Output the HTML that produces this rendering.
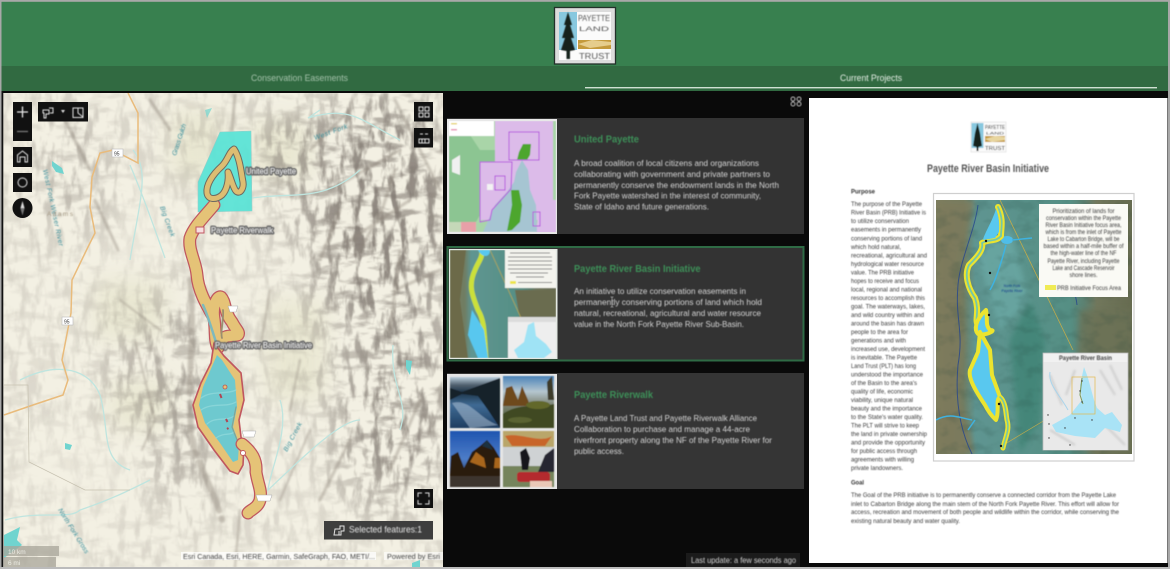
<!DOCTYPE html>
<html lang="en">
<head>
<meta charset="utf-8">
<title>Payette Land Trust</title>
<style>
html,body{margin:0;padding:0;background:#0a0a0a;width:1170px;height:569px;overflow:hidden}
svg{display:block}
text{font-family:"Liberation Sans",sans-serif}
.c{font-size:8.6px;fill:#d6d6d6}
.h{font-size:10.4px;font-weight:bold;fill:#3d9058}
.d{font-size:6.2px;fill:#3a3a3a}
.b{font-size:6.1px;fill:#3a3a3a}
.r{font-size:6.6px;fill:#3a8f9c;font-style:italic}
.l{font-size:8.4px;fill:#efefef;stroke:#666;stroke-width:3px;paint-order:stroke;stroke-linejoin:round}
.i{stroke:#e0e0e0;fill:none;stroke-width:1}
</style>
</head>
<body>
<svg width="1170" height="569" viewBox="0 0 1170 569" xmlns="http://www.w3.org/2000/svg">
<defs>
<filter id="ridge" x="0" y="0" width="100%" height="100%" color-interpolation-filters="sRGB">
<feTurbulence type="fractalNoise" baseFrequency=".11 .035" numOctaves="4" seed="7"/>
<feColorMatrix values="0 0 0 0 .47  0 0 0 0 .44  0 0 0 0 .41  4.5 0 0 0 -2.15"/>
<feGaussianBlur stdDeviation=".6"/>
</filter>
<filter id="ridge2" x="0" y="0" width="100%" height="100%" color-interpolation-filters="sRGB">
<feTurbulence type="fractalNoise" baseFrequency=".035 .1" numOctaves="4" seed="21"/>
<feColorMatrix values="0 0 0 0 .5  0 0 0 0 .47  0 0 0 0 .44  4.5 0 0 0 -2.25"/>
<feGaussianBlur stdDeviation=".6"/>
</filter>
<filter id="veg" x="0" y="0" width="100%" height="100%" color-interpolation-filters="sRGB">
<feTurbulence type="fractalNoise" baseFrequency=".06 .09" numOctaves="3" seed="5"/>
<feColorMatrix values="0 0 0 0 .12  0 0 0 0 .25  0 0 0 0 .22  4 0 0 0 -1.9"/>
<feGaussianBlur stdDeviation=".5"/>
</filter>
<filter id="b12"><feGaussianBlur stdDeviation="12"/></filter>
<filter id="b25"><feGaussianBlur stdDeviation="22"/></filter>
<filter id="b3"><feGaussianBlur stdDeviation="3"/></filter>
<filter id="b1"><feGaussianBlur stdDeviation="1"/></filter>
<filter id="b06"><feGaussianBlur stdDeviation=".6"/></filter>
<filter id="bt"><feGaussianBlur stdDeviation=".42"/></filter>
<mask id="mt" maskUnits="userSpaceOnUse" x="0" y="90" width="450" height="480">
<rect x="0" y="90" width="450" height="480" fill="#3a3a3a"/>
<g filter="url(#b25)">
<ellipse cx="380" cy="210" rx="75" ry="120" fill="#fff"/>
<ellipse cx="395" cy="400" rx="55" ry="110" fill="#e8e8e8"/>
<ellipse cx="300" cy="160" rx="40" ry="50" fill="#bbb"/>
<ellipse cx="188" cy="400" rx="16" ry="100" fill="#fff"/>
<ellipse cx="70" cy="170" rx="35" ry="60" fill="#888"/>
<ellipse cx="150" cy="370" rx="40" ry="45" fill="#999"/>
<ellipse cx="80" cy="470" rx="70" ry="50" fill="#222"/>
<ellipse cx="300" cy="310" rx="30" ry="70" fill="#333"/>
<ellipse cx="330" cy="490" rx="20" ry="40" fill="#222"/>
<ellipse cx="135" cy="240" rx="30" ry="50" fill="#111"/>
</g>
</mask>
<clipPath id="mc"><rect x="3" y="93" width="440" height="474"/></clipPath>
<clipPath id="c1"><rect x="449" y="121" width="107" height="111"/></clipPath>
<clipPath id="c2"><rect x="450" y="250" width="106" height="108"/></clipPath>
<clipPath id="dm"><rect x="936" y="200" width="196" height="254"/></clipPath>
<clipPath id="q1"><rect x="450" y="377" width="50" height="51"/></clipPath>
<clipPath id="q2"><rect x="503" y="376" width="51" height="52"/></clipPath>
<clipPath id="q3"><rect x="450" y="431" width="50" height="56"/></clipPath>
<clipPath id="q4"><rect x="503" y="431" width="51" height="56"/></clipPath>
<linearGradient id="dmb" x1="0" x2="1" y1="0" y2="0">
<stop offset="0" stop-color="#7d7f5f"/><stop offset=".14" stop-color="#6f7d63"/><stop offset=".2" stop-color="#5f9591"/><stop offset=".68" stop-color="#558f84"/><stop offset=".76" stop-color="#5d8070"/><stop offset=".82" stop-color="#71775c"/><stop offset="1" stop-color="#666b50"/>
</linearGradient>
<linearGradient id="s1" x1="0" y1="0" x2="0" y2="1"><stop offset="0" stop-color="#bcd0df"/><stop offset=".16" stop-color="#50606e"/><stop offset=".3" stop-color="#1d3448"/><stop offset=".55" stop-color="#3f6a94"/><stop offset="1" stop-color="#1e3d60"/></linearGradient>
<linearGradient id="s2" x1="0" y1="0" x2="0" y2="1"><stop offset="0" stop-color="#4b83b8"/><stop offset=".3" stop-color="#b5c6cf"/><stop offset=".55" stop-color="#7d8474"/><stop offset="1" stop-color="#3f4a22"/></linearGradient>
<linearGradient id="s3" x1="0" y1="0" x2="0" y2="1"><stop offset="0" stop-color="#1f55b0"/><stop offset=".5" stop-color="#4d7dc8"/><stop offset="1" stop-color="#1c1f2a"/></linearGradient>
</defs>

<!-- frame + header -->
<rect width="1170" height="569" fill="#0a0a0a"/>
<rect x="0" y="0" width="1170" height="66" fill="#38804f"/>
<rect x="0" y="66" width="1170" height="25" fill="#316a41"/>
<rect x="585" y="87" width="572" height="1.4" fill="#cfe0d2"/>
<g filter="url(#bt)">
<text x="251" y="81" font-size="9.4" fill="#a4c2aa" textLength="97" lengthAdjust="spacingAndGlyphs">Conservation Easements</text>
<text x="840" y="81" font-size="9.4" fill="#e6efe6" textLength="62" lengthAdjust="spacingAndGlyphs">Current Projects</text>
</g>

<!-- logo -->
<g>
<rect x="554.500" y="7.500" width="61" height="56.500" fill="#dcdcdc" stroke="#23302a" stroke-width="1.300"/>
<rect x="559" y="12" width="52" height="48" fill="#fbfbfb"/>
<rect x="559" y="12" width="18" height="38" fill="#88c8df"/>
<path d="M568 12 L572 25 L570 25 L574 38 L571 38 L575 50 L570 51 L570 59 L566.500 59 L566.500 51 L561 50 L565 38 L562 38 L566 25 L564 25Z" fill="#17211f" filter="url(#b06)"/>
<g filter="url(#bt)">
<text x="578" y="21" font-size="8.300" fill="#555" textLength="32" lengthAdjust="spacingAndGlyphs">PAYETTE</text>
<text x="579" y="31" font-size="6.500" fill="#555" textLength="30" lengthAdjust="spacingAndGlyphs">LAND</text>
<text x="579" y="59" font-size="8.600" fill="#555" textLength="31" lengthAdjust="spacingAndGlyphs">TRUST</text>
</g>
<rect x="578" y="40" width="33" height="9" fill="#c49a3c"/>
<path d="M578 44 L592 40 L611 42 L611 45 L590 48 Z" fill="#e6cd8c"/>
</g>

<!-- MAP -->
<g clip-path="url(#mc)">
<rect x="3" y="93" width="440" height="474" fill="#f3f0e3"/>
<g filter="url(#b12)" fill="#e9e7d2">
<rect x="170" y="110" width="55" height="70"/>
<rect x="95" y="280" width="70" height="60"/>
<rect x="265" y="300" width="60" height="100"/>
<rect x="110" y="380" width="60" height="50"/>
<rect x="250" y="120" width="60" height="60"/>
</g>
<g mask="url(#mt)">
<rect x="3" y="93" width="440" height="474" filter="url(#ridge)" opacity=".8"/>
<rect x="3" y="93" width="440" height="474" filter="url(#ridge2)" opacity=".6"/>
</g>
<g fill="none" stroke="#8c8378" stroke-linecap="round" filter="url(#b1)" opacity=".42">
<path d="M190 280 C196 330 186 380 192 440 C200 470 214 490 222 520" stroke-width="6" stroke-dasharray="30 5 18 8"/>
<path d="M310 150 L350 110 M330 190 L400 150 M350 240 L410 200 M395 100 L430 170 L440 190 M395 170 L382 210 L360 250 M340 210 L320 260 M400 250 L390 330 M395 290 L440 270 M350 440 L320 500 M420 400 L390 470 M150 100 L170 130 M235 95 L232 130 M60 110 L90 170 M95 200 L118 250" stroke-width="3"/>
<path d="M135 340 L155 420 L142 450 M120 300 L160 330 M260 350 L270 290 M300 360 L290 410 M310 430 L280 500 M240 510 L235 567" stroke-width="2"/>
</g>
<g fill="none" stroke="#bfe5df" stroke-width="1.300">
<path d="M130 260 C140 200 150 170 133 150 M165 258 C155 230 145 200 130 165 M20 380 C60 360 90 370 100 395 C110 430 100 460 130 470 M5 520 C40 510 70 520 80 510 C110 500 130 490 150 480 M320 110 L308 118 C350 105 360 120 400 140 M240 200 C290 190 320 205 360 170 M280 400 C290 430 270 470 268 490 C300 460 340 420 360 420 M393 345 C390 390 410 400 400 430"/>
</g>
<g fill="#70d4cf">
<path d="M52 161 L62 168 L64 174 L56 172 L52 166Z"/>
<path d="M406 360 L412 361 L410 375 L406 368Z"/>
<path d="M65 443 L72 445 L70 450 L65 449Z"/>
<path d="M205 110 L212 108 L207 118Z" opacity=".7"/>
<path d="M4 535 L20 527 L17 540 L22 545 L4 558Z"/>
<path d="M412 563 L420 560 L420 567 L412 567Z"/>
</g>
<path d="M128 93 L138 113 L138 163 L113 150 L100 153 L92 177 L90 207 L95 233 L88 247 L72 280 L71 313 L62 360 L68 380 L63 395 L33 405 L4 415" fill="none" stroke="#e9bb7b" stroke-width="1.500"/>
<rect x="112" y="149" width="11" height="8" fill="#fff" stroke="#bbb" stroke-width=".6"/>
<text x="114" y="155.500" font-size="5" fill="#333">95</text>
<rect x="62" y="317" width="11" height="8" fill="#fff" stroke="#bbb" stroke-width=".6"/>
<text x="64" y="323.500" font-size="5" fill="#333">95</text>
<path d="M4 385 L28 385 L29 462 L85 490 L130 490" fill="none" stroke="#c7c2b1" stroke-width=".7"/>

<!-- cyan area -->
<path d="M220 132 L251 131 L252 211 L198 212 L198 182Z" fill="#58e4d7" stroke="#8ecbc7" stroke-width=".6" opacity=".92"/>
<!-- corridor -->
<g fill="none" stroke-linejoin="round" stroke-linecap="round">
<path d="M214 205 C206 215 194 226 190 238 C188 250 196 262 197 275 C198 290 206 304 214 318 M214 318 C212 305 218 295 221 297 C226 302 224 312 232 322 C236 330 240 332 238 335 C232 337 226 334 222 340 M214 318 C216 330 214 340 218 348" stroke="#c0565f" stroke-width="13"/>
<path d="M214 205 C206 215 194 226 190 238 C188 250 196 262 197 275 C198 290 206 304 214 318 M214 318 C212 305 218 295 221 297 C226 302 224 312 232 322 C236 330 240 332 238 335 C232 337 226 334 222 340 M214 318 C216 330 214 340 218 348" stroke="#e5c377" stroke-width="10.500"/>
<path d="M203 305 C208 316 212 330 216 342" stroke="#7db9bd" stroke-width="2.500"/>
<path d="M223 310 C224 320 220 332 222 338" stroke="#9a8f6f" stroke-width="1.800"/>
<!-- upper lake loop -->
<path d="M234 149 C229 152 228 160 222 166 C212 175 206 185 207 193 C208 200 216 200 222 195 C227 190 229 180 228 172 C231 178 233 188 236 191 C240 195 244 188 243 182 C241 172 240 158 234 149Z" stroke="#6d6a62" stroke-width="7"/>
<path d="M234 149 C229 152 228 160 222 166 C212 175 206 185 207 193 C208 200 216 200 222 195 C227 190 229 180 228 172 C231 178 233 188 236 191 C240 195 244 188 243 182 C241 172 240 158 234 149Z" stroke="#ddbd72" stroke-width="5"/>
<!-- lower lake outer -->
<path d="M214 343 L211 363 L201 383 L193 405 L198 427 L214 450 L230 471 L238 474 L243 465 L244 445 L241 437 L239 420 L244 400 L241 373 L224 356Z" fill="#e5c377" stroke="#c0565f" stroke-width="1.600"/>
<path d="M217 355 L203 387 L199 405 L205 423 L220 443 L233 462 L238 460 L239 443 L233 427 L237 407 L235 380 L222 360Z" fill="#6ec9cf"/>
<path d="M201 398 C212 390 226 395 236 390 M201 410 C212 402 226 408 236 402 M207 424 C215 416 226 422 234 416 M216 438 C224 432 230 436 234 432" stroke="#93dadb" stroke-width="1.300" opacity=".7" fill="none"/>
<path d="M236 407 L232 427 L239 445" stroke="#8e8a70" stroke-width="1.200" opacity=".6" fill="none"/>
<!-- south corridor -->
<path d="M242 444 C252 452 257 460 256 472 C258 485 262 490 260 500 C258 508 250 510 248 513" stroke="#c0565f" stroke-width="13"/>
<path d="M242 444 C252 452 257 460 256 472 C258 485 262 490 260 500 C258 508 250 510 248 513" stroke="#e5c377" stroke-width="10.500"/>
</g>
<circle cx="225" cy="387" r="2" fill="#e5c377" stroke="#b55" stroke-width=".8"/>
<path d="M220 394 l1.500 4 M226 419 l1.500 3 M227 429 l1.500 -1" stroke="#b04553" stroke-width="2"/>
<circle cx="243" cy="453" r="2.500" fill="#fff" stroke="#c0565f" stroke-width=".9"/>
<rect x="196" y="227" width="8" height="6" fill="#f7dfe0" stroke="#c0565f" stroke-width="1"/>
<g fill="#fff" stroke="#aaa" stroke-width=".5">
<path d="M228 306 l10 0 -2 6 -6 0z M242 431 l14 0 -2 6 -10 0z M256 495 l16 0 -2 6 -12 0z"/>
</g>

<g filter="url(#bt)">
<text class="r" transform="translate(43,170) rotate(78)" textLength="78">West Fork Weiser River</text>
<text class="r" transform="translate(160,207) rotate(70)" textLength="32">Big Creek</text>
<text class="r" transform="translate(176,156) rotate(-72)" textLength="33">Grass Gulch</text>
<text class="r" transform="translate(287,452) rotate(-62)" textLength="32">Big Creek</text>
<text class="r" transform="translate(58,510) rotate(58)" textLength="52">North Fork Gross</text>
<text class="r" transform="translate(315,140) rotate(-20)" textLength="35">West Fork</text>
<text x="47" y="216" font-size="6.500" fill="#a59a85" textLength="26">Adams</text>
<text class="l" x="246" y="174" textLength="50" lengthAdjust="spacingAndGlyphs">United Payette</text>
<text class="l" x="211" y="233" textLength="62" lengthAdjust="spacingAndGlyphs">Payette Riverwalk</text>
<text class="l" x="215" y="348" textLength="97" lengthAdjust="spacingAndGlyphs">Payette River Basin Initiative</text>
</g>

<!-- scale, attribution -->
<rect x="4" y="546" width="55" height="10" fill="#a8a69a" opacity=".75"/>
<rect x="4" y="557" width="52" height="10" fill="#a8a69a" opacity=".75"/>
<text x="8" y="554" font-size="6.500" fill="#eeeee6">10 km</text>
<text x="8" y="565" font-size="6.500" fill="#eeeee6">6 mi</text>
<rect x="181" y="552" width="195" height="8" fill="#fff" opacity=".75"/>
<rect x="384" y="552" width="59" height="8" fill="#fff" opacity=".6"/>
<g filter="url(#bt)">
<text x="183" y="559" font-size="7.200" fill="#444" textLength="192" lengthAdjust="spacingAndGlyphs">Esri Canada, Esri, HERE, Garmin, SafeGraph, FAO, METI/...</text>
<text x="387" y="559" font-size="7.200" fill="#444" textLength="53" lengthAdjust="spacingAndGlyphs">Powered by Esri</text>
</g>

<!-- widgets -->
<g fill="#111">
<rect x="13" y="102" width="19" height="39"/>
<rect x="13" y="147" width="19" height="20"/>
<rect x="13" y="173" width="19" height="19"/>
<circle cx="22.500" cy="208" r="10"/>
<rect x="38" y="102" width="50" height="19.500"/>
<rect x="414" y="102" width="19" height="19.500"/>
<rect x="414" y="128" width="19" height="19.500"/>
<rect x="414" y="489" width="19" height="19"/>
</g>
<g filter="url(#bt)">
<path d="M17 112 H28 M22.500 106.500 V117.500" stroke="#e8e8e8" stroke-width="1.300"/>
<path d="M17 131.500 H28" stroke="#777" stroke-width="1.300"/>
<path d="M17.500 162 V155 L22.500 151 L27.500 155 V162 H25 V157 H20 V162Z" class="i"/>
<circle cx="22.500" cy="182.500" r="4.500" class="i" stroke-width="1.500"/>
<path d="M22.500 201 L24.500 208 L22.500 215 L20.500 208Z" fill="#ddd"/>
<path d="M22.500 208 L24.500 208 L22.500 215 L20.500 208Z" fill="#777"/>
<path d="M43 110 H49 V114 H46 V118 H44 V113 H43Z M49 108 H53 V113 H50" class="i"/>
<path d="M61 110 L65 110 L63 113Z" fill="#ddd"/>
<rect x="73" y="108" width="10" height="9.500" class="i"/>
<path d="M78 108 V113 L83 117" class="i" stroke-width=".8"/>
<g class="i" stroke-width=".9">
<rect x="419" y="107" width="4" height="4"/><rect x="425" y="107" width="4" height="4"/><rect x="419" y="113" width="4" height="4"/><rect x="425" y="113" width="4" height="4"/>
<path d="M420 134 h3 M425 134 h3 M419 139 h10 v4 h-10z M422 139 v4 M425 139 v4"/>
<path d="M418 497 V493 H422 M425 493 H429 V497 M429 500 V504 H425 M422 504 H418 V500"/>
</g>
</g>
<rect x="324" y="521" width="109" height="18.500" fill="#3e3e3e"/>
<path d="M335 529 H340 V526 H344 V531 H341 V535 H334 Z M339 531 v4" class="i" stroke-width=".9"/>
<g filter="url(#bt)"><text x="349" y="532.500" font-size="9" fill="#e6e6e6" textLength="73" lengthAdjust="spacingAndGlyphs">Selected features:1</text></g>
</g>

<!-- frame edges -->
<rect x="0" y="0" width="1170" height="1.800" fill="#a8a8a8"/>
<rect x="0" y="0" width="1.500" height="569" fill="#a8a8a8"/>
<rect x="1168" y="0" width="2" height="569" fill="#a8a8a8"/>
<rect x="0" y="567" width="1170" height="2" fill="#bbb"/>
<rect x="1.500" y="91" width="1.800" height="476" fill="#111"/>

<!-- middle panel -->
<g filter="url(#bt)">
<circle cx="793" cy="99" r="2" stroke="#bbb" fill="none"/><circle cx="799" cy="99" r="2" stroke="#bbb" fill="none"/><circle cx="793" cy="104" r="2" stroke="#bbb" fill="none"/><circle cx="799" cy="104" r="2" stroke="#bbb" fill="none"/>
</g>
<rect x="447" y="118" width="357" height="116" fill="#333"/>
<rect x="447.500" y="247" width="356" height="113.500" fill="#333" stroke="#2f6b45" stroke-width="2"/>
<rect x="447" y="373" width="357" height="116" fill="#353535"/>

<!-- card 1 image -->
<rect x="447" y="119" width="110" height="115" fill="#e8e8e8"/>
<g clip-path="url(#c1)" filter="url(#b06)">
<rect x="449" y="121" width="107" height="111" fill="#a9d5a8"/>
<path d="M449 135 L470 135 L480 150 L495 150 L495 162 L480 162 L480 215 L470 232 H449Z" fill="#8cc592"/>
<path d="M495 121 H553 V160 L553 200 H540 L540 162 H495Z" fill="#dcbbe9"/>
<path d="M480 162 H540 V220 H480Z" fill="#dcbbe9"/>
<path d="M540 200 H556 V233 H536Z" fill="#dcbbe9"/>
<path d="M522 160 L516 172 L514 182 L507 192 L495 205 L483 232 H537 L536 205 L530 190 L528 170Z" fill="#a6c5d2"/>
<path d="M523 144 L531 144 L530 155 L527 160 L517 160 L519 152Z" fill="#4da62f"/>
<path d="M511 190 L519 190 L522 205 L520 222 L512 230 L507 231 L512 205Z" fill="#4da62f"/>
<g fill="none" stroke="#b64fdc" stroke-width="1">
<path d="M509 132 H539 V160 H509Z"/>
<path d="M480 162 L512 162 L511 189 L492 210 L490 220 L480 222Z"/>
<path d="M495 176 H505 V190 H495Z"/>
<path d="M533 212 H540 V226 H533Z"/>
</g>
<path d="M452 160 L460 155 L460 175 L452 172Z" fill="#f0f0f0"/>
<rect x="487" y="184" width="6" height="6" fill="#f3f3f3"/>
<rect x="449" y="121" width="45" height="15" fill="#fff"/>
<rect x="451" y="123" width="6" height="1.500" fill="#e6d46a"/><rect x="451" y="129" width="6" height="1.500" fill="#e890b4"/>
<rect x="461" y="222" width="15" height="10" fill="#e8a0a8"/>
<rect x="449" y="222" width="12" height="10" fill="#c5d8b8"/>
</g>

<!-- card 2 image -->
<rect x="449" y="249" width="108.500" height="110" fill="#e4e9e4"/>
<g clip-path="url(#c2)" filter="url(#b06)">
<rect x="450" y="250" width="106" height="108" fill="url(#dmb)"/>
<path d="M450 250 H466 L460 300 L468 358 H450Z" fill="#6c6a4a"/>
<path d="M515 290 H556 V320 H520 Z" fill="#6a6c50"/>
<path d="M481 250 C484 256 478 262 475 270 C468 285 472 295 478 310 C484 320 484 328 486 358" fill="none" stroke="#cbe03a" stroke-width="5"/>
<path d="M472 310 L484 330 L488 358 H478 L468 335Z" fill="#58c7ef"/>
<path d="M478 250 C482 258 490 258 490 250Z" fill="#58c7ef"/>
<path d="M490 250 L522 320" stroke="#b8a84e" stroke-width=".7" fill="none"/>
<rect x="505" y="250" width="51" height="38" fill="#f4f4ee"/>
<g stroke="#555" stroke-width="1" opacity=".7">
<path d="M510 253 H550 M508 257 H552 M508 261 H552 M508 265 H552 M508 269 H552 M510 273 H548 M516 277 H544"/>
</g>
<rect x="510" y="281" width="6" height="3" fill="#ece448"/>
<path d="M518 282.500 H552" stroke="#666" stroke-width=".8"/>
<rect x="508" y="317" width="48" height="41" fill="#eeeeee"/>
<rect x="508" y="317" width="48" height="5" fill="#dcdcdc"/>
<path d="M528 325 L534 322 L536 336 L546 344 L552 352 L544 358 H518 L514 350 L524 342Z" fill="#9fe3f5"/>
</g>

<!-- card 3 image -->
<rect x="447" y="374" width="110" height="115" fill="#e6e6e6"/>
<g filter="url(#b06)">
<g clip-path="url(#q1)"><rect x="450" y="377" width="50" height="51" fill="url(#s1)"/>
<path d="M450 388 L462 392 L500 378 L500 428 L488 410 L478 396 L462 394 L450 400Z" fill="#18202c"/>
<path d="M452 403 C470 398 478 418 498 425 L470 428Z" fill="#a9bdd2" opacity=".55"/></g>
<g clip-path="url(#q2)"><rect x="503" y="376" width="51" height="52" fill="url(#s2)"/>
<path d="M503 406 L506 388 L512 386 L518 400 L522 386 L528 400 L530 406Z" fill="#6e4a1e"/>
<path d="M503 414 C520 402 540 408 554 404 L554 428 H503Z" fill="#3f4822"/>
<ellipse cx="538" cy="405" rx="12" ry="4" fill="#62682a"/>
<ellipse cx="520" cy="420" rx="12" ry="3" fill="#5a6430"/>
<path d="M547 382 L552 376 L554 400 L548 400Z" fill="#3d3a2b"/></g>
<g clip-path="url(#q3)"><rect x="450" y="431" width="50" height="56" fill="url(#s3)"/>
<path d="M450 476 L451 456 L458 452 L464 468 L472 452 L480 446 L487 440 L494 448 L500 458 L500 476Z" fill="#2a1c0c"/>
<path d="M470 462 L476 452 L484 458 L486 468Z M495 458 L500 458 L500 468 L494 468Z" fill="#a8661c"/>
<path d="M482 446 L487 440 L493 450Z" fill="#1f3140"/>
<rect x="450" y="476" width="50" height="11" fill="#3e352e"/></g>
<g clip-path="url(#q4)"><rect x="503" y="431" width="51" height="56" fill="#cfd2d4"/>
<rect x="503" y="431" width="51" height="16" fill="#b9a66a"/>
<path d="M505 436 C520 432 540 444 552 436 L545 446 L512 446Z" fill="#c8652a"/>
<rect x="503" y="466" width="51" height="21" fill="#75845c"/>
<path d="M520 452 L526 448 L530 458 L528 470 L522 470Z" fill="#15151a"/>
<path d="M545 455 L554 448 L554 472 L538 472Z" fill="#262830"/>
<rect x="517" y="472" width="33" height="10" rx="3" fill="#b42a2e"/>
<rect x="530" y="481" width="22" height="6" fill="#e9c8b7"/></g>
</g>

<!-- card text -->
<g filter="url(#bt)">
<text class="h" x="574" y="142.500" textLength="65" lengthAdjust="spacingAndGlyphs">United Payette</text>
<text class="c" x="574" y="165.800" textLength="185" lengthAdjust="spacingAndGlyphs">A broad coalition of local citizens and organizations</text>
<text class="c" x="574" y="176.800" textLength="196" lengthAdjust="spacingAndGlyphs">collaborating with government and private partners to</text>
<text class="c" x="574" y="187.800" textLength="205" lengthAdjust="spacingAndGlyphs">permanently conserve the endowment lands in the North</text>
<text class="c" x="574" y="198.600" textLength="187" lengthAdjust="spacingAndGlyphs">Fork Payette watershed in the interest of community,</text>
<text class="c" x="574" y="209.500" textLength="135" lengthAdjust="spacingAndGlyphs">State of Idaho and future generations.</text>

<text class="h" x="574" y="271.800" textLength="126.500" lengthAdjust="spacingAndGlyphs">Payette River Basin Initiative</text>
<text class="c" x="574" y="294" textLength="172" lengthAdjust="spacingAndGlyphs">An initiative to utilize conservation easements in</text>
<text class="c" x="574" y="305" textLength="188" lengthAdjust="spacingAndGlyphs">permanently conserving portions of land which hold</text>
<text class="c" x="574" y="315.800" textLength="187" lengthAdjust="spacingAndGlyphs">natural, recreational, agricultural and water resource</text>
<text class="c" x="574" y="326.800" textLength="170" lengthAdjust="spacingAndGlyphs">value in the North Fork Payette River Sub-Basin.</text>

<text class="h" x="574" y="397.800" textLength="79" lengthAdjust="spacingAndGlyphs">Payette Riverwalk</text>
<text class="c" x="574" y="420.800" textLength="183" lengthAdjust="spacingAndGlyphs">A Payette Land Trust and Payette Riverwalk Alliance</text>
<text class="c" x="574" y="432" textLength="176" lengthAdjust="spacingAndGlyphs">Collaboration to purchase and manage a 44-acre</text>
<text class="c" x="574" y="443" textLength="198" lengthAdjust="spacingAndGlyphs">riverfront property along the NF of the Payette River for</text>
<text class="c" x="574" y="454" textLength="50" lengthAdjust="spacingAndGlyphs">public access.</text>
</g>
<path d="M612 297 V307 M610.500 297 H613.500 M610.500 307 H613.500" stroke="#9a9a9a" stroke-width=".8"/>
<rect x="686" y="553" width="114" height="14" fill="#1b1b1b"/>
<g filter="url(#bt)"><text x="691" y="563" font-size="8.400" fill="#d4d4d4" textLength="105" lengthAdjust="spacingAndGlyphs">Last update: a few seconds ago</text></g>

<!-- right document -->
<rect x="809" y="98" width="359" height="465" fill="#fff"/>
<rect x="1167" y="98" width="1" height="465" fill="#777"/>
<!-- doc logo -->
<g filter="url(#b06)">
<rect x="971" y="122" width="35" height="30" fill="#fafafa" stroke="#ddd" stroke-width=".6"/>
<rect x="971.500" y="123" width="12" height="25" fill="#88c8df"/>
<path d="M977.500 123 L980 133 L982 146 L978.500 147 L978.500 151 L976.500 151 L976.500 147 L973 146 L975 133Z" fill="#17211f"/>
<rect x="985" y="136" width="20" height="6" fill="#c49a3c"/>
<path d="M985 139 L995 136 L1005 137 V140 L992 142Z" fill="#e8d6a0"/>
</g>
<g filter="url(#bt)">
<text x="985" y="129" font-size="5" fill="#555" textLength="20" lengthAdjust="spacingAndGlyphs">PAYETTE</text>
<text x="986" y="134.500" font-size="3.600" fill="#555" textLength="18" lengthAdjust="spacingAndGlyphs">LAND</text>
<text x="985" y="150" font-size="5.200" fill="#555" textLength="20" lengthAdjust="spacingAndGlyphs">TRUST</text>
<text x="927" y="172" font-size="11" font-weight="bold" fill="#555" textLength="122" lengthAdjust="spacingAndGlyphs">Payette River Basin Initiative</text>
<text x="851" y="193.500" font-size="6.800" font-weight="bold" fill="#333" textLength="24" lengthAdjust="spacingAndGlyphs">Purpose</text>
<text class="d" x="851" y="206.200" textLength="71" lengthAdjust="spacingAndGlyphs">The purpose of the Payette</text>
<text class="d" x="851" y="214.700" textLength="75" lengthAdjust="spacingAndGlyphs">River Basin (PRB) Initiative is</text>
<text class="d" x="851" y="223.200" textLength="58" lengthAdjust="spacingAndGlyphs">to utilize conservation</text>
<text class="d" x="851" y="231.700" textLength="70" lengthAdjust="spacingAndGlyphs">easements in permanently</text>
<text class="d" x="851" y="240.300" textLength="71" lengthAdjust="spacingAndGlyphs">conserving portions of land</text>
<text class="d" x="851" y="248.800" textLength="50" lengthAdjust="spacingAndGlyphs">which hold natural,</text>
<text class="d" x="851" y="257.300" textLength="76" lengthAdjust="spacingAndGlyphs">recreational, agricultural and</text>
<text class="d" x="851" y="265.800" textLength="73" lengthAdjust="spacingAndGlyphs">hydrological water resource</text>
<text class="d" x="851" y="274.300" textLength="63" lengthAdjust="spacingAndGlyphs">value. The PRB initiative</text>
<text class="d" x="851" y="282.800" textLength="68" lengthAdjust="spacingAndGlyphs">hopes to receive and focus</text>
<text class="d" x="851" y="291.300" textLength="71" lengthAdjust="spacingAndGlyphs">local, regional and national</text>
<text class="d" x="851" y="299.800" textLength="74" lengthAdjust="spacingAndGlyphs">resources to accomplish this</text>
<text class="d" x="851" y="308.300" textLength="74" lengthAdjust="spacingAndGlyphs">goal. The waterways, lakes,</text>
<text class="d" x="851" y="316.800" textLength="73" lengthAdjust="spacingAndGlyphs">and wild country within and</text>
<text class="d" x="851" y="325.300" textLength="73" lengthAdjust="spacingAndGlyphs">around the basin has drawn</text>
<text class="d" x="851" y="333.800" textLength="57" lengthAdjust="spacingAndGlyphs">people to the area for</text>
<text class="d" x="851" y="342.300" textLength="55" lengthAdjust="spacingAndGlyphs">generations and with</text>
<text class="d" x="851" y="350.800" textLength="74" lengthAdjust="spacingAndGlyphs">increased use, development</text>
<text class="d" x="851" y="359.300" textLength="66" lengthAdjust="spacingAndGlyphs">is inevitable. The Payette</text>
<text class="d" x="851" y="367.800" textLength="65" lengthAdjust="spacingAndGlyphs">Land Trust (PLT) has long</text>
<text class="d" x="851" y="376.300" textLength="72" lengthAdjust="spacingAndGlyphs">understood the importance</text>
<text class="d" x="851" y="384.800" textLength="66" lengthAdjust="spacingAndGlyphs">of the Basin to the area's</text>
<text class="d" x="851" y="393.300" textLength="62" lengthAdjust="spacingAndGlyphs">quality of life, economic</text>
<text class="d" x="851" y="401.800" textLength="62" lengthAdjust="spacingAndGlyphs">viability, unique natural</text>
<text class="d" x="851" y="410.300" textLength="71" lengthAdjust="spacingAndGlyphs">beauty and the importance</text>
<text class="d" x="851" y="418.800" textLength="72" lengthAdjust="spacingAndGlyphs">to the State's water quality.</text>
<text class="d" x="851" y="427.300" textLength="68" lengthAdjust="spacingAndGlyphs">The PLT will strive to keep</text>
<text class="d" x="851" y="435.800" textLength="76" lengthAdjust="spacingAndGlyphs">the land in private ownership</text>
<text class="d" x="851" y="444.300" textLength="74" lengthAdjust="spacingAndGlyphs">and provide the opportunity</text>
<text class="d" x="851" y="452.800" textLength="66" lengthAdjust="spacingAndGlyphs">for public access through</text>
<text class="d" x="851" y="461.300" textLength="63" lengthAdjust="spacingAndGlyphs">agreements with willing</text>
<text class="d" x="851" y="469.800" textLength="52" lengthAdjust="spacingAndGlyphs">private landowners.</text>
<text x="851" y="484.500" font-size="6.800" font-weight="bold" fill="#333" textLength="13" lengthAdjust="spacingAndGlyphs">Goal</text>
<text class="d" x="851" y="497.200" textLength="265" lengthAdjust="spacingAndGlyphs">The Goal of the PRB initiative is to permanently conserve a connected corridor from the Payette Lake</text>
<text class="d" x="851" y="505.800" textLength="268" lengthAdjust="spacingAndGlyphs">inlet to Cabarton Bridge along the main stem of the North Fork Payette River. This effort will allow for</text>
<text class="d" x="851" y="514.200" textLength="268" lengthAdjust="spacingAndGlyphs">access, recreation and movement of both people and wildlife within the corridor, while conserving the</text>
<text class="d" x="851" y="522.800" textLength="109" lengthAdjust="spacingAndGlyphs">existing natural beauty and water quality.</text>
</g>

<!-- doc map -->
<rect x="933.500" y="193.500" width="200.500" height="267.500" fill="#fff" stroke="#cfcfcf" stroke-width="1.200"/>
<g clip-path="url(#dm)">
<rect x="936" y="200" width="196" height="254" fill="url(#dmb)"/>
<g filter="url(#b3)" opacity=".8">
<path d="M936 200 H975 L960 270 L964 340 L960 400 L975 454 H936Z" fill="#7e7a5c"/>
<path d="M1080 310 H1132 V454 H1090 L1075 400 Z" fill="#6c7256"/>
<path d="M1010 340 L1030 300 L1045 340 L1040 420 L1020 454Z" fill="#3f8476"/>
<path d="M975 250 L1010 230 L1030 300 L1000 330Z" fill="#6aa8a4"/>
</g>
<rect x="936" y="200" width="196" height="254" filter="url(#veg)" opacity=".14"/>
<path d="M978 205 C975 230 960 260 958 285 C955 320 964 330 958 365 C955 400 960 430 972 454 M1040 205 C1050 250 1075 280 1077 305" fill="none" stroke="#24458f" stroke-width="1" opacity=".8"/>
<path d="M1000 200 L1073 350" stroke="#c2ab4a" stroke-width=".8" fill="none"/>
<path d="M1000 447 L1045 420 L1060 410" stroke="#c2ab4a" stroke-width=".7" fill="none"/>
<ellipse cx="1007" cy="240" rx="6" ry="4" fill="#4fbde8"/>
<path d="M1006 245 C1002 260 996 280 990 290 M1012 240 L1032 238 M936 420 C950 412 960 418 972 420 M975 420 L968 430" stroke="#3fb2e0" stroke-width="1.500" fill="none"/>
<g fill="none" stroke-linejoin="round" stroke-linecap="round">
<path d="M998 207 C1004 220 1001 228 1001 236 C996 242 989 239 982 243 C984 250 976 258 969 265 C964 275 968 288 975 298 C980 312 974 320 978 325" stroke="#ece42f" stroke-width="6"/>
<path d="M998 207 C1004 220 1001 228 1001 236 C996 242 989 239 982 243 C984 250 976 258 969 265 C964 275 968 288 975 298 C980 312 974 320 978 325" stroke="#74c7a8" stroke-width="1.800"/>
<path d="M986 310 C988 320 985 325 990 330 C998 330 985 336 978 334 C974 330 975 320 986 310Z" stroke="#ece42f" stroke-width="4" fill="#59c8ef"/>
<path d="M980 332 L978 352 L970 370 C968 378 975 390 985 405 C990 415 994 418 996 420 C1000 410 995 400 1000 397 L992 375 L990 350Z" stroke="#ece42f" stroke-width="4" fill="#59c8ef"/>
<path d="M1000 397 C1006 402 1006 415 1007 420 C1010 430 1005 438 1003 448" stroke="#ece42f" stroke-width="5"/>
<path d="M1000 397 C1006 402 1006 415 1007 420 C1010 430 1005 438 1003 448" stroke="#74c7a8" stroke-width="1.500"/>
</g>
<path d="M996 209 C992 222 984 234 983 240 L995 238 L999 232 C1000 222 998 214 996 209Z" fill="#59c8ef"/>
<circle cx="986" cy="241" r="1.200" fill="#111"/><circle cx="990" cy="273" r="1.200" fill="#111"/><circle cx="989" cy="315" r="1.200" fill="#111"/><circle cx="999" cy="404" r="1.200" fill="#111"/><circle cx="1001" cy="446" r="1.200" fill="#111"/>
<!-- text box -->
<rect x="1039" y="204" width="89" height="93" fill="#fafaf5"/>
<g filter="url(#bt)">
<text class="b" x="1083.500" y="213" text-anchor="middle" textLength="62" lengthAdjust="spacingAndGlyphs">Prioritization of lands for</text>
<text class="b" x="1083.500" y="220" text-anchor="middle" textLength="75" lengthAdjust="spacingAndGlyphs">conservation within the Payette</text>
<text class="b" x="1083.500" y="227" text-anchor="middle" textLength="76" lengthAdjust="spacingAndGlyphs">River Basin Initiative focus area,</text>
<text class="b" x="1083.500" y="234" text-anchor="middle" textLength="76" lengthAdjust="spacingAndGlyphs">which is from the inlet of Payette</text>
<text class="b" x="1083.500" y="241" text-anchor="middle" textLength="72" lengthAdjust="spacingAndGlyphs">Lake to Cabarton Bridge, will be</text>
<text class="b" x="1083.500" y="248" text-anchor="middle" textLength="80" lengthAdjust="spacingAndGlyphs">based within a half-mile buffer of</text>
<text class="b" x="1083.500" y="255.200" text-anchor="middle" textLength="66" lengthAdjust="spacingAndGlyphs">the high-water line of the NF</text>
<text class="b" x="1083.500" y="263" text-anchor="middle" textLength="72" lengthAdjust="spacingAndGlyphs">Payette River, including Payette</text>
<text class="b" x="1083.500" y="270" text-anchor="middle" textLength="62" lengthAdjust="spacingAndGlyphs">Lake and Cascade Reservoir</text>
<text class="b" x="1083.500" y="277" text-anchor="middle" textLength="28" lengthAdjust="spacingAndGlyphs">shore lines.</text>
<text class="b" x="1057" y="290" textLength="64" lengthAdjust="spacingAndGlyphs">PRB Initiative Focus Area</text>
<text x="1012" y="287" font-size="3.500" fill="#173b8a" text-anchor="middle">North Fork</text>
<text x="1012" y="292" font-size="3.500" fill="#173b8a" text-anchor="middle">Payette River</text>
</g>
<rect x="1045" y="285" width="11" height="5" fill="#f0eb55"/>
<!-- inset -->
<rect x="1043" y="353" width="85" height="97" fill="#f1f1f1" stroke="#bbb" stroke-width=".8"/>
<rect x="1043.500" y="362" width="84" height="88" fill="#e9e9e9"/>
<g filter="url(#b1)" stroke="#c6c6c6" stroke-width="2" fill="none" opacity=".8">
<path d="M1050 375 L1062 405 M1075 370 L1066 395 M1100 370 L1115 395 M1110 365 L1122 390 M1050 430 L1075 445 M1105 425 L1125 445"/>
</g>
<path d="M1084 367 L1088 378 L1094 400 L1097 408 L1105 415 L1112 412 L1122 425 L1120 432 L1105 428 L1095 438 L1075 436 L1056 432 L1052 425 L1070 415 L1082 400 L1080 385Z" fill="#a9e3f6"/>
<rect x="1072" y="377" width="23" height="37" fill="none" stroke="#e3b94e" stroke-width=".7"/>
<path d="M1082 380 L1080 394 L1082 402 M1050 372 C1048 385 1060 395 1068 410" stroke="#a9d4ec" stroke-width="1" fill="none"/>
<path d="M1082 378 L1080 395 L1083 404" stroke="#7f9a55" stroke-width="1" fill="none"/>
<g fill="#333"><circle cx="1082" cy="381" r=".7"/><circle cx="1080" cy="391" r=".7"/><circle cx="1082" cy="402" r=".7"/><circle cx="1048" cy="415" r=".7"/><circle cx="1049" cy="424" r=".7"/><circle cx="1049" cy="438" r=".7"/><circle cx="1075" cy="418" r=".7"/><circle cx="1065" cy="428" r=".7"/><circle cx="1092" cy="420" r=".7"/><circle cx="1070" cy="445" r=".7"/></g>
<g filter="url(#bt)"><text x="1059" y="360" font-size="6.300" font-weight="bold" fill="#444" textLength="53" lengthAdjust="spacingAndGlyphs">Payette River Basin</text></g>
</g>
</svg>
</body>
</html>
